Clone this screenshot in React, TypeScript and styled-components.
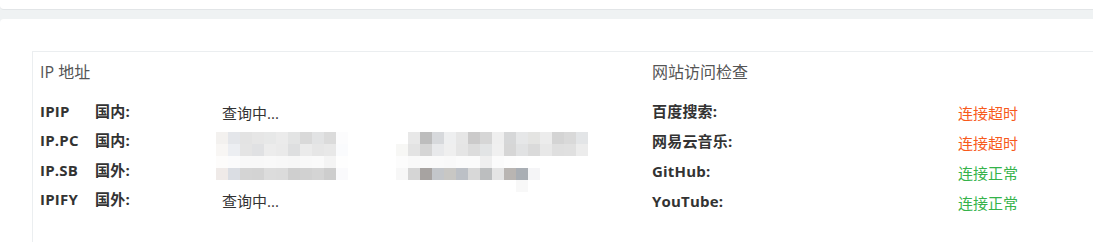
import * as React from 'react'
import styled, { createGlobalStyle } from 'styled-components'

const GlobalStyle = createGlobalStyle`
  html, body {
    margin: 0;
    padding: 0;
    background: #eff2f3;
    overflow: hidden;
  }
  body {
    font-family: "Open Sans", "Noto Sans CJK SC", sans-serif;
    color: #333;
  }
`
const Page = styled.div`
  width: 1330px;
`
const TopBar = styled.div`
  height: 9px;
  background: #fff;
  border-bottom: 1px solid #e2e5e7;
  border-radius: 0 0 4px 4px;
`
const Card = styled.div`
  margin-top: 9px;
  background: #fff;
  border-radius: 4px 4px 0 0;
  padding: 32px 32px 40px;
`
const Panel = styled.div`
  display: grid;
  grid-template-columns: 612px 612px;
  border: 1px solid #ebeef0;
  padding: 8px 7px 40px;
`
const Section = styled.div`
  display: flex;
  flex-direction: column;
`
const SectionTitle = styled.div`
  font-size: 16px;
  line-height: 24px;
  color: #555;
  margin-bottom: 13px;
`
const IpTable = styled.div`
  display: grid;
  grid-template-columns: 182px 1fr;
  grid-auto-rows: 29.4px;
`
const IpName = styled.div`
  display: flex;
  font-size: 15px;
  line-height: 29.4px;
  font-weight: 700;
  letter-spacing: 0.2px;
  color: #333;
`
const Source = styled.span`
  width: 55px;
`
const Value = styled.div`
  font-size: 15px;
  line-height: 29.4px;
  padding-top: 2px;
  color: #333;
`
const MosaicCell = styled.div`
  grid-row: span 2;
  margin: 6px 0 0 -6px;
`
const SiteTable = styled.div`
  display: grid;
  grid-template-columns: 306px 306px;
  grid-auto-rows: 30px;
`
const SiteName = styled.div`
  font-size: 15px;
  line-height: 28px;
  font-weight: 700;
  letter-spacing: 0.2px;
  color: #333;
`
const Status = styled.div<{ $ok: boolean }>`
  font-size: 15px;
  line-height: 28px;
  padding-top: 2px;
  color: ${({ $ok }) => ($ok ? '#35b34a' : '#f75a1c')};
`

// blurred IP addresses, pixelated
const leftBlur = [
  ['#f3f1ef', '#e4e6ea', '#e3e3e3', '#e6e6e6', '#e7e8e8', '#ebebeb', '#e3e4e4', '#d9d9d9', '#e2e3e4', '#dbdbdb', '#fcfcfd'],
  ['#f8f6f4', '#eceef2', '#e4e4e4', '#e0e1e3', '#ececec', '#eaeaea', '#dedfe0', '#ebebeb', '#e6e6e6', '#e8e8e8', '#fafbfd'],
  ['#fdfcfb', '#fbfbfc', '#f8f8f8', '#f8f8f8', '#f9f9f9', '#f8f8f8', '#f7f7f7', '#f9f9f9', '#fafafa', '#f4f4f4', '#fefefe'],
  ['#efeae8', '#dadde3', '#d4d4d4', '#d3d3d3', '#dcdcdc', '#dbdbdb', '#cfcfcf', '#d1d1d1', '#d4d4d4', '#cdcdcd', '#fafafc']
]
const rightBlur = [
  ['#ffffff', '#e8e8e8', '#bdbdbd', '#d7d9dc', '#eeeff0', '#e6e6e6', '#cbcaca', '#d6d6d6', '#efefef', '#d6d7d8', '#e6e7e8', '#e4e4e2', '#ececec', '#d4d4d4', '#d9d9d9', '#e3e5e7'],
  ['#f7f7f5', '#e3e3e3', '#d5d5d5', '#e8e9eb', '#efefef', '#e5e5e5', '#dcdcdc', '#e2e4e5', '#f0f0f0', '#d6d6d6', '#e1e2e3', '#dadada', '#e8e8e8', '#dfdfdf', '#e0e0e0', '#ececec'],
  ['#fcfcfc', '#f9f9f9', '#fafafa', '#fafafa', '#f9f9f9', '#fbfbfb', '#fbfbfb', '#efefef', '#fbfbfb', '#fdfdfd', '#fefefe'],
  ['#f7f7f7', '#d5d5d5', '#a7a3a1', '#c3c6ca', '#c8c7c4', '#bcc0c6', '#d8d8d8', '#bcbebf', '#e4e4e4', '#b9b5b2', '#a9aeb4', '#f5f5f7'],
  ['#ffffff', '#ffffff', '#ffffff', '#ffffff', '#ffffff', '#ffffff', '#ffffff', '#ffffff', '#ffffff', '#ffffff', '#f8f8f8']
]

const Mosaic = () => (
  <svg width="380" height="60" viewBox="0 0 380 60">
    {leftBlur.map((row, r) =>
      row.map((c, i) => <rect key={`l${r}-${i}`} x={i * 12} y={r * 12} width="12" height="12" fill={c} />)
    )}
    {rightBlur.map((row, r) =>
      row.map((c, i) => <rect key={`r${r}-${i}`} x={180 + i * 12} y={r * 12} width="12" height="12" fill={c} />)
    )}
  </svg>
)

const sites = [
  { name: '百度搜索:', ok: false },
  { name: '网易云音乐:', ok: false },
  { name: 'GitHub:', ok: true },
  { name: 'YouTube:', ok: true }
]

export default function App() {
  return (
    <Page>
      <GlobalStyle />
      <TopBar />
      <Card>
        <Panel>
          <Section>
            <SectionTitle>IP 地址</SectionTitle>
            <IpTable>
              <IpName>
                <Source>IPIP</Source>国内:
              </IpName>
              <Value>查询中...</Value>
              <IpName>
                <Source>IP.PC</Source>国内:
              </IpName>
              <MosaicCell>
                <Mosaic />
              </MosaicCell>
              <IpName>
                <Source>IP.SB</Source>国外:
              </IpName>
              <IpName>
                <Source>IPIFY</Source>国外:
              </IpName>
              <Value>查询中...</Value>
            </IpTable>
          </Section>
          <Section>
            <SectionTitle>网站访问检查</SectionTitle>
            <SiteTable>
              {sites.map(s => (
                <React.Fragment key={s.name}>
                  <SiteName>{s.name}</SiteName>
                  <Status $ok={s.ok}>{s.ok ? '连接正常' : '连接超时'}</Status>
                </React.Fragment>
              ))}
            </SiteTable>
          </Section>
        </Panel>
      </Card>
    </Page>
  )
}
